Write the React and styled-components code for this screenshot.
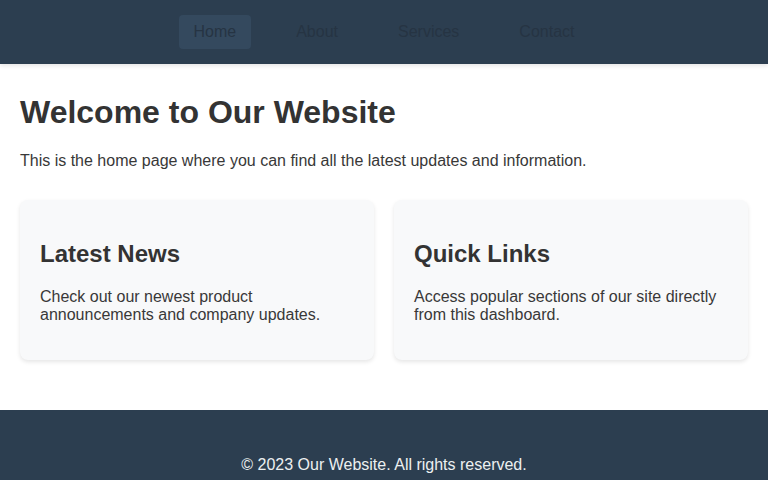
import React from "react";
import styled, { createGlobalStyle } from "styled-components";

const GlobalStyle = createGlobalStyle`
  body {
    margin: 0;
    font-family: "Liberation Sans", Arial, sans-serif;
    color: #333;
    background: #fff;
  }
`;

const Header = styled.header`
  background-color: #2c3e50;
  height: 64px;
  display: flex;
  align-items: center;
  justify-content: center;
  box-shadow: 0 2px 4px rgba(0, 0, 0, 0.1);
  position: relative;
`;

const Nav = styled.nav`
  display: flex;
  gap: 30px;
`;

const NavLink = styled.a`
  display: block;
  padding: 8px 15px;
  font-size: 16px;
  line-height: 18px;
  color: #263443;
  text-decoration: none;
  border-radius: 4px;
  background-color: ${props => props.active ? "#34495e" : "transparent"};
`;

const Main = styled.main`
  padding: 9px 20px 20px 20px;
`;

const Title = styled.h1`
  font-size: 32px;
  margin: 21px 0;
  color: #333;
`;

const Intro = styled.p`
  font-size: 16px;
  margin: 16px 0;
  color: #383838;
`;

const CardGrid = styled.section`
  display: grid;
  grid-template-columns: 1fr 1fr;
  gap: 20px;
  margin: 30px 0;
`;

const Card = styled.div`
  background-color: #f8f9fa;
  border-radius: 8px;
  padding: 20px;
  box-shadow: 0 2px 4px rgba(0, 0, 0, 0.1);
`;

const CardTitle = styled.h2`
  font-size: 24px;
  margin: 20px 0;
  color: #333;
`;

const CardText = styled.p`
  font-size: 16px;
  margin: 0 0 16px 0;
  color: #383838;
`;

const Footer = styled.footer`
  background-color: #2c3e50;
  color: #ecf0f1;
  text-align: center;
  padding: 30px 20px 8px 20px;

  p {
    margin: 16px 0;
    font-size: 16px;
  }
`;

const links = ["Home", "About", "Services", "Contact"];

const cards = [
  {
    title: "Latest News",
    text: "Check out our newest product announcements and company updates.",
  },
  {
    title: "Quick Links",
    text: "Access popular sections of our site directly from this dashboard.",
  },
];

export default function App() {
  return (
    <>
      <GlobalStyle />
      <Header>
        <Nav>
          {links.map((l, i) => (
            <NavLink key={l} href="#" active={i === 0 ? 1 : 0}>
              {l}
            </NavLink>
          ))}
        </Nav>
      </Header>
      <Main>
        <Title>Welcome to Our Website</Title>
        <Intro>
          This is the home page where you can find all the latest updates and information.
        </Intro>
        <CardGrid>
          {cards.map(c => (
            <Card key={c.title}>
              <CardTitle>{c.title}</CardTitle>
              <CardText>{c.text}</CardText>
            </Card>
          ))}
        </CardGrid>
      </Main>
      <Footer>
        <p>© 2023 Our Website. All rights reserved.</p>
      </Footer>
    </>
  );
}
